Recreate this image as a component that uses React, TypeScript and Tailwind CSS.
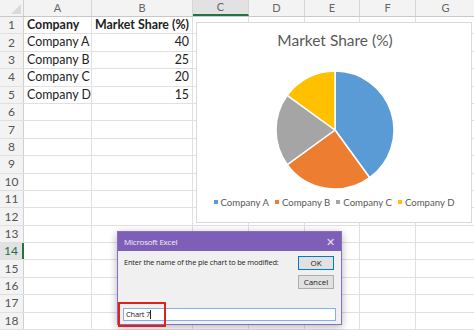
import React from 'react';

const COLS = [
  { id: 'A', w: 68 },
  { id: 'B', w: 101 },
  { id: 'C', w: 56 },
  { id: 'D', w: 56 },
  { id: 'E', w: 55 },
  { id: 'F', w: 56 },
  { id: 'G', w: 60 },
];

const DATA = [
  { name: 'Company A', share: 40, color: '#5b9bd5' },
  { name: 'Company B', share: 25, color: '#ed7d31' },
  { name: 'Company C', share: 20, color: '#a5a5a5' },
  { name: 'Company D', share: 15, color: '#ffc000' },
];

const ROWS = Array.from({ length: 18 }, (_, i) => i + 1);

function cellText(row: number, col: string) {
  if (row === 1 && col === 'A') return 'Company';
  if (row === 1 && col === 'B') return 'Market Share (%)';
  const d = DATA[row - 2];
  if (!d) return '';
  if (col === 'A') return d.name;
  if (col === 'B') return String(d.share);
  return '';
}

function PieChart() {
  const cx = 70, cy = 70, r = 59;
  let start = 0;
  const pt = (a: number) => {
    const rad = (a * Math.PI) / 180;
    return `${(cx + r * Math.sin(rad)).toFixed(2)} ${(cy - r * Math.cos(rad)).toFixed(2)}`;
  };
  return (
    <svg width="140" height="140" viewBox="0 0 140 140">
      {DATA.map((d) => {
        const end = start + (d.share / 100) * 360;
        const large = end - start > 180 ? 1 : 0;
        const path = `M ${cx} ${cy} L ${pt(start)} A ${r} ${r} 0 ${large} 1 ${pt(end)} Z`;
        start = end;
        return <path key={d.name} d={path} fill={d.color} stroke="#fff" strokeWidth="1.5" strokeLinejoin="round" />;
      })}
    </svg>
  );
}

export default function App() {
  return (
    <div className="relative w-[474px] h-[330px] overflow-hidden bg-white font-['Lato','Liberation_Sans',sans-serif]">
      {/* column headers */}
      <div className="flex h-[17px] bg-[#f3f3f3] border-b border-[#c8c8c8]">
        <div className="w-[24px] shrink-0 border-r border-[#d0d0d0] flex items-end justify-end p-[2px]">
          <svg width="10" height="10" viewBox="0 0 10 10">
            <path d="M10 0 L10 10 L0 10 Z" fill="#dadada" />
          </svg>
        </div>
        {COLS.map((c) => (
          <div
            key={c.id}
            style={{ width: c.w }}
            className={`shrink-0 flex items-center justify-center text-[11px] text-[#666] border-r border-[#d6d6d6] ${
              c.id === 'C' ? 'bg-[#e2e2e2] border-b-2 border-b-[#217346]' : ''
            }`}
          >
            {c.id}
          </div>
        ))}
      </div>

      {/* rows */}
      {ROWS.map((row) => (
        <div key={row} className="flex h-[17.4px] border-b border-[#e0e0e0]">
          <div
            className={`w-[24px] shrink-0 flex items-center justify-center text-[12px] ${
              row === 14
                ? 'bg-[#e2e2e2] text-[#217346] border-r-2 border-[#217346]'
                : 'bg-[#f3f3f3] text-[#555] border-r border-[#d0d0d0]'
            }`}
          >
            {row}
          </div>
          {COLS.map((c) => {
            const t = cellText(row, c.id);
            return (
              <div
                key={c.id}
                style={{ width: c.w }}
                className={`shrink-0 flex items-center px-[3px] text-[12.4px] leading-none text-[#222] border-r border-[#e0e0e0] whitespace-nowrap ${
                  row === 1 ? 'font-bold' : ''
                } ${c.id === 'B' && row > 1 ? 'justify-end' : ''}`}
              >
                {t}
              </div>
            );
          })}
        </div>
      ))}

      {/* chart */}
      <div className="absolute left-[196px] top-[22px] w-[276px] h-[201px] bg-white border border-[#d9d9d9] flex flex-col items-center">
        <div className="mt-[10px] text-[15.5px] text-[#595959] leading-none pl-[2px]">Market Share (%)</div>
        <div className="mt-[11px] ml-[2px]">
          <PieChart />
        </div>
        <div className="-mt-[2px] flex items-center gap-[6px] text-[9.6px] text-[#595959] leading-none">
          {DATA.map((d) => (
            <div key={d.name} className="flex items-center gap-[3px]">
              <span className="w-[4px] h-[4px]" style={{ background: d.color }} />
              <span>{d.name}</span>
            </div>
          ))}
        </div>
      </div>

      {/* dialog */}
      <div className="absolute left-[117px] top-[231px] w-[225px] h-[94px] bg-[#f0f0f0] border border-[#8a6cc0] shadow-[0_2px_8px_rgba(0,0,0,0.3)] flex flex-col font-['Open_Sans','Liberation_Sans',sans-serif]">
        <div className="h-[19px] bg-[#7e5fb8] flex items-center justify-between pl-[6px] pr-[6px]">
          <span className="text-[8px] text-white/90 tracking-[-0.2px]">Microsoft Excel</span>
          <span className="text-[11px] text-white/80 leading-none">✕</span>
        </div>
        <div className="flex justify-between pl-[6px] pr-[7px] pt-[5px]">
          <span className="text-[7.4px] text-[#222] leading-none mt-[3px] whitespace-nowrap tracking-[-0.15px]">
            Enter the name of the pie chart to be modified:
          </span>
          <div className="flex flex-col gap-[5px]">
            <div className="w-[36px] h-[14px] bg-[#e1e1e1] border border-[#0078d7] flex items-center justify-center text-[8px] text-[#222]">
              OK
            </div>
            <div className="w-[36px] h-[14px] bg-[#e1e1e1] border border-[#adadad] flex items-center justify-center text-[8px] text-[#222]">
              Cancel
            </div>
          </div>
        </div>
        <div className="relative mt-auto mb-[3px] ml-[5px] mr-[5px] h-[13px] bg-white border border-[#7ab4e8] flex items-center px-[2px] text-[7.5px] text-[#222] tracking-[-0.2px]">
          <span>Chart 7</span>
          <span className="w-px h-[9px] bg-[#222]" />
          <div className="absolute -left-[6px] -top-[7px] w-[48px] h-[25px] border-2 border-[#e0201c]" />
        </div>
      </div>
    </div>
  );
}
